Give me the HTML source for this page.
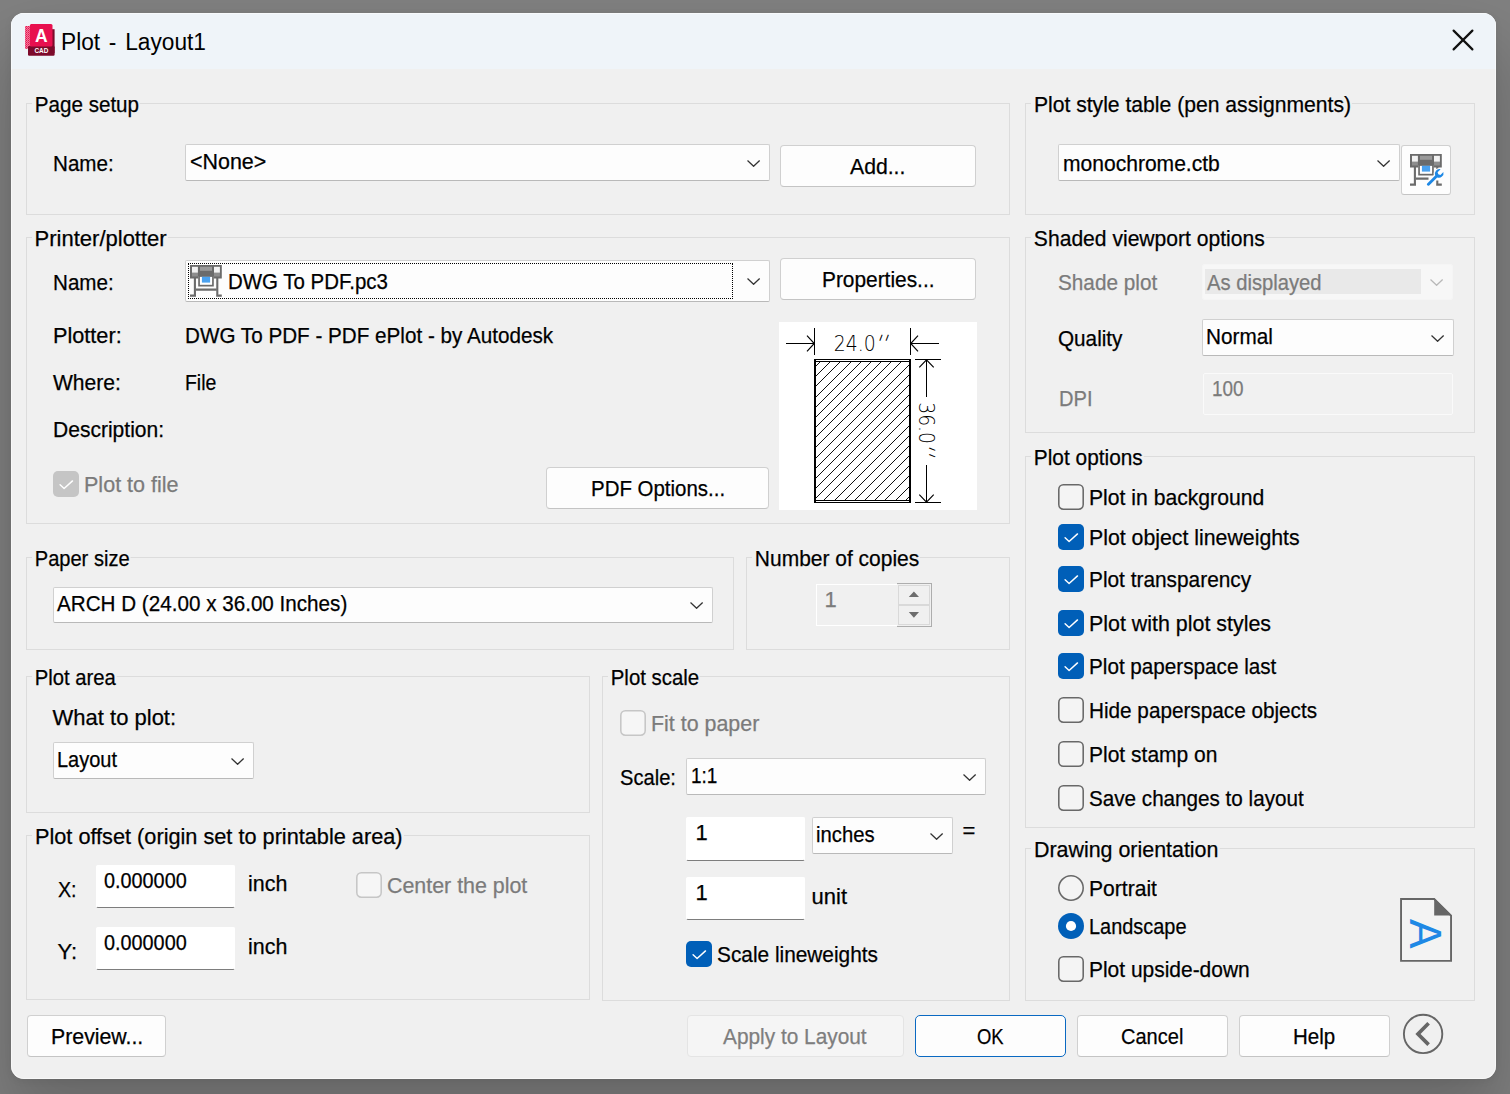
<!DOCTYPE html>
<html lang="en"><head><meta charset="utf-8"><title>Plot - Layout1</title>
<style>
html,body{margin:0;padding:0;}
body{width:1510px;height:1094px;overflow:hidden;background:#818181;position:relative;font-family:"Liberation Sans",sans-serif;font-size:22px;color:#000;}
#shadow{position:absolute;left:11px;top:13px;width:1485px;height:1066px;border-radius:13px;box-shadow:0 2px 8px 0 rgba(0,0,0,.06),0 40px 70px 10px rgba(0,0,0,.19);}
#win{position:absolute;left:11px;top:13px;width:1485px;height:1066px;border-radius:13px;background:#f0f0f0;overflow:hidden;box-shadow:inset 0 0 0 1px rgba(255,255,255,.55);}
#tbar{position:absolute;left:0;top:0;width:100%;height:56px;background:#eff4f9;box-shadow:inset 1px 1px 0 rgba(255,255,255,.55),inset -1px 0 0 rgba(255,255,255,.55);}
#ui{position:absolute;left:0;top:0;width:1510px;height:1094px;}
#ui>div,#ui>svg,#ui>span{position:absolute;box-sizing:border-box;}
.t{-webkit-text-stroke:0.25px currentColor;white-space:nowrap;line-height:30px;height:30px;transform-origin:0 50%;}
.ttl{-webkit-text-stroke:0;word-spacing:2.5px;}
.gl{padding:0 1px 0 3px;margin-left:-3px;}
.grp{border:1px solid #dcdcdc;}
.combo{background:#fdfdfd;border:1px solid #d0d0d0;border-bottom-color:#b9b9b9;border-radius:2px;}
.combo.dis{background:#f7f7f7;border-color:#f5f5f5;}
.btn{background:#fdfdfd;border:1px solid #d0d0d0;border-bottom-color:#c4c4c4;border-radius:4px;}
.btn.bdis{background:#f5f5f5;border-color:#e4e4e4;}
.btn.def{border:1px solid #0a69c2;border-radius:5px;}
.edit{background:#fff;border:1px solid #fff;border-bottom:1px solid #7d7d7d;border-radius:2px;}
.edit.dis{background:#f1f1f1;border:1px solid #fafafa;}
.focus{border:1px dotted #000;}

</style></head>
<body>
<div id="shadow"></div>
<div id="win">
<div id="tbar"></div>
<svg style="position:absolute;left:13px;top:10px" width="32" height="34" viewBox="24 23 32 34">
<defs><pattern id="dp" width="2" height="2" patternUnits="userSpaceOnUse"><rect width="2" height="2" fill="#f27a9b"/><rect width="1" height="1" fill="#e8104f"/><rect x="1" y="1" width="1" height="1" fill="#ea3c6e"/></pattern></defs><rect x="25" y="26" width="5.5" height="22.8" fill="url(#dp)"/>
<rect x="28" y="46" width="26.6" height="9.7" rx="1.2" fill="#7d0a2b"/>
<rect x="51.5" y="29.2" width="3.1" height="24" fill="#7d0a2b"/>
<rect x="29.9" y="23.9" width="22.6" height="22.6" rx="1.5" fill="#e8104f"/>
<text x="41.4" y="41.7" text-anchor="middle" font-family="Liberation Sans, sans-serif" font-weight="bold" font-size="17.5" fill="#fff">A</text>
<text x="41.4" y="53" text-anchor="middle" font-family="Liberation Sans, sans-serif" font-weight="bold" font-size="6.4" fill="#fff">CAD</text>
</svg>
<svg style="position:absolute;left:1439px;top:14px" width="26" height="26" viewBox="1450 27 26 26"><path d="M1453.6 30.6 L1472.4 49.4 M1472.4 30.6 L1453.6 49.4" stroke="#111" stroke-width="2.2" stroke-linecap="round" fill="none"/></svg>
</div>
<div id="ui">
<div class="grp" style="left:26px;top:103px;width:984px;height:112px;"></div>
<div class="combo" style="left:185px;top:144px;width:585px;height:37px;"></div>
<svg class="a" style="left:745.6999999999999px;top:158.54999999999998px" width="15.2" height="9.3" viewBox="-2 -2 15.2 9.3"><path d="M0 0 L5.6 5.3 L11.2 0" fill="none" stroke="#333" stroke-width="1.3" stroke-linecap="square" stroke-linejoin="round"/></svg>
<div class="btn" style="left:780px;top:145px;width:196px;height:42px;"></div>
<div class="grp" style="left:26px;top:237px;width:984px;height:287px;"></div>
<div class="combo" style="left:185px;top:260px;width:585px;height:42px;"></div>
<svg class="a" style="left:745.6999999999999px;top:277.05px" width="15.2" height="9.3" viewBox="-2 -2 15.2 9.3"><path d="M0 0 L5.6 5.3 L11.2 0" fill="none" stroke="#333" stroke-width="1.3" stroke-linecap="square" stroke-linejoin="round"/></svg>
<div class="focus" style="left:188px;top:263px;width:545px;height:36px;"></div>
<svg style="left:189.05px;top:264.3px" width="36" height="36" viewBox="-1 -1 36 36"><path d="M4.9 13 V30.6 M0 30.6 H6 M27.3 13 V30.6 M26.2 30.6 H31.8 M6 24.6 H26.2" stroke="#6b6b6b" stroke-width="2.1" fill="none"/><rect x="9.05" y="11" width="13.9" height="9.65" fill="#fff" stroke="#6b6b6b" stroke-width="1.7"/><rect x="11.9" y="11.7" width="8.2" height="5.9" fill="#4aa1ef"/><path d="M0 0 H31.8 V13.5 H23.6 V11.2 H8.2 V13.5 H0 Z" fill="#6b6b6b"/><rect x="2" y="1.8" width="5.9" height="5.9" fill="#f2f2f2"/><rect x="2" y="8" width="5.9" height="3.5" fill="#8e8e8e"/><rect x="24" y="1.8" width="5.9" height="5.9" fill="#f2f2f2"/><rect x="24" y="8" width="5.9" height="3.5" fill="#8e8e8e"/><rect x="10" y="1.8" width="12" height="4" fill="#9a9a9a"/></svg>
<div class="btn" style="left:780px;top:258px;width:196px;height:42px;"></div>
<svg style="left:53px;top:471px" width="26" height="26" viewBox="0 0 26 26"><rect x="0" y="0" width="26" height="26" rx="5" fill="#c5c5c5"/><path d="M7.1 13.8 L11.1 17.5 L19.5 9.9" fill="none" stroke="#fff" stroke-width="1.45" stroke-linecap="round" stroke-linejoin="round"/></svg>
<div class="btn" style="left:546px;top:467px;width:223px;height:42px;"></div>
<div style="left:779px;top:322px;width:198px;height:188px;background:#fff;"></div><svg style="left:779px;top:322px" width="198" height="188" viewBox="779 322 198 188"><defs><clipPath id="hc"><rect x="816" y="362" width="93" height="138"/></clipPath></defs><path d="M825 357 L677 505 M835 357 L687 505 M845 357 L697 505 M856 357 L708 505 M866 357 L718 505 M876 357 L728 505 M886 357 L738 505 M896 357 L748 505 M906 357 L758 505 M917 357 L769 505 M927 357 L779 505 M937 357 L789 505 M947 357 L799 505 M957 357 L809 505 M967 357 L819 505 M978 357 L830 505 M988 357 L840 505 M998 357 L850 505 M1008 357 L860 505 M1018 357 L870 505 M1028 357 L880 505 M1039 357 L891 505 M1049 357 L901 505 M1059 357 L911 505 " stroke="#000" stroke-width="0.95" fill="none" clip-path="url(#hc)"/><path d="M814 359 H911 V503 H814 Z M816 360 V502 H909 V360 Z M816 361 H909 V362 H816 Z M816 500 H909 V501 H816 Z" fill="#000" fill-rule="evenodd" shape-rendering="crispEdges"/><path d="M814.5 328 V355 M910.5 328 V355 M786 343.5 H814 M911 343.5 H939 M915 359.5 H941 M915 502.5 H941 M926.5 360 V397 M926.5 465 V502" stroke="#000" stroke-width="1" fill="none" shape-rendering="crispEdges"/><path d="M807 335.6 L814.3 343.5 L807 351.4 M918 335.6 L910.7 343.5 L918 351.4 M919.3 367.3 L926.5 359.8 L933.7 367.3 M919.3 494.7 L926.5 502.2 L933.7 494.7" stroke="#000" stroke-width="1.15" fill="none"/><text transform="translate(833.8 351.2) scale(0.875 1)" font-family="DejaVu Sans, sans-serif" font-weight="200" font-size="21.5" fill="#000">24.0<tspan rotate="24" dx="-2.8 0.6" dy="-1.6" font-size="24">''</tspan></text><text transform="translate(918.8 402.2) rotate(90) scale(0.875 1)" font-family="DejaVu Sans, sans-serif" font-weight="200" font-size="21.5" fill="#000">36.0<tspan rotate="24" dx="-2.8 0.6" dy="-1.6" font-size="24">''</tspan></text></svg>
<div class="grp" style="left:26px;top:557px;width:708px;height:93px;"></div>
<div class="combo" style="left:53px;top:587px;width:660px;height:36px;"></div>
<svg class="a" style="left:688.6999999999999px;top:601.0500000000001px" width="15.2" height="9.3" viewBox="-2 -2 15.2 9.3"><path d="M0 0 L5.6 5.3 L11.2 0" fill="none" stroke="#333" stroke-width="1.3" stroke-linecap="square" stroke-linejoin="round"/></svg>
<div class="grp" style="left:746px;top:557px;width:264px;height:93px;"></div>
<div style="left:816px;top:584px;width:82px;height:42px;background:#f0f0f0;border:1px solid #fff;"></div><div style="left:897px;top:583px;width:35px;height:44px;border:1px solid #adadad;border-left:none;background:#f0f0f0;"></div><div style="left:898px;top:585px;width:32px;height:20px;border:1px solid #d9d9d9;background:#f0f0f0;"></div><div style="left:898px;top:605px;width:32px;height:20px;border:1px solid #d9d9d9;background:#f0f0f0;"></div><svg style="left:898px;top:585px" width="32" height="40" viewBox="898 585 32 40"><path d="M908.8 597 L913.9 591.4 L919 597 Z M908.8 612.1 L913.9 617.7 L919 612.1 Z" fill="#6d6d6d"/></svg>
<div class="grp" style="left:26px;top:676px;width:564px;height:137px;"></div>
<div class="combo" style="left:53px;top:742px;width:201px;height:37px;"></div>
<svg class="a" style="left:229.70000000000002px;top:756.5500000000001px" width="15.2" height="9.3" viewBox="-2 -2 15.2 9.3"><path d="M0 0 L5.6 5.3 L11.2 0" fill="none" stroke="#333" stroke-width="1.3" stroke-linecap="square" stroke-linejoin="round"/></svg>
<div class="grp" style="left:602px;top:676px;width:408px;height:325px;"></div>
<svg style="left:620px;top:710px" width="26" height="26" viewBox="0 0 26 26"><rect x="0.8" y="0.8" width="24.4" height="24.4" rx="4.6" fill="#f6f6f6" stroke="#c6c6c6" stroke-width="1.55"/></svg>
<div class="combo" style="left:686px;top:758px;width:300px;height:37px;"></div>
<svg class="a" style="left:961.6999999999999px;top:772.5500000000001px" width="15.2" height="9.3" viewBox="-2 -2 15.2 9.3"><path d="M0 0 L5.6 5.3 L11.2 0" fill="none" stroke="#333" stroke-width="1.3" stroke-linecap="square" stroke-linejoin="round"/></svg>
<div class="edit" style="left:686px;top:817px;width:119px;height:44px;"></div>
<div class="combo" style="left:812px;top:817px;width:141px;height:37px;"></div>
<svg class="a" style="left:928.6999999999999px;top:831.5500000000001px" width="15.2" height="9.3" viewBox="-2 -2 15.2 9.3"><path d="M0 0 L5.6 5.3 L11.2 0" fill="none" stroke="#333" stroke-width="1.3" stroke-linecap="square" stroke-linejoin="round"/></svg>
<div class="edit" style="left:686px;top:877px;width:119px;height:43px;"></div>
<svg style="left:686px;top:941px" width="26" height="26" viewBox="0 0 26 26"><rect x="0" y="0" width="26" height="26" rx="5" fill="#005fb8"/><path d="M7.1 13.8 L11.1 17.5 L19.5 9.9" fill="none" stroke="#fff" stroke-width="1.45" stroke-linecap="round" stroke-linejoin="round"/></svg>
<div class="grp" style="left:26px;top:835px;width:564px;height:165px;"></div>
<div class="edit" style="left:96px;top:865px;width:139px;height:43px;"></div>
<div class="edit" style="left:96px;top:927px;width:139px;height:43px;"></div>
<svg style="left:356px;top:872px" width="26" height="26" viewBox="0 0 26 26"><rect x="0.8" y="0.8" width="24.4" height="24.4" rx="4.6" fill="#f6f6f6" stroke="#c6c6c6" stroke-width="1.55"/></svg>
<div class="btn" style="left:27px;top:1015px;width:139px;height:42px;"></div>
<div class="btn bdis" style="left:687px;top:1015px;width:217px;height:42px;"></div>
<div class="btn def" style="left:915px;top:1015px;width:151px;height:42px;"></div>
<div class="btn" style="left:1077px;top:1015px;width:151px;height:42px;"></div>
<div class="btn" style="left:1239px;top:1015px;width:151px;height:42px;"></div>
<svg style="left:1400px;top:1011px" width="46" height="46" viewBox="1400 1011 46 46"><circle cx="1423.1" cy="1033.9" r="19.2" fill="none" stroke="#666" stroke-width="1.9"/><path d="M1428.6 1023.3 L1418 1033.95 L1428.6 1044.6" fill="none" stroke="#666" stroke-width="3.7"/></svg>
<div class="grp" style="left:1025px;top:103px;width:450px;height:112px;"></div>
<div class="combo" style="left:1058px;top:144px;width:342px;height:37px;"></div>
<svg class="a" style="left:1375.7px;top:158.54999999999998px" width="15.2" height="9.3" viewBox="-2 -2 15.2 9.3"><path d="M0 0 L5.6 5.3 L11.2 0" fill="none" stroke="#333" stroke-width="1.3" stroke-linecap="square" stroke-linejoin="round"/></svg>
<div class="btn" style="left:1401px;top:145px;width:50px;height:50px;border-radius:3px;"></div>
<svg style="left:1409.1px;top:153.2px" width="36" height="36" viewBox="-1 -1 36 36"><path d="M4.9 13 V30.6 M0 30.6 H6 M27.3 13 V15 M27.3 26.5 V30.6 M26.2 30.6 H31.8 M6 24.6 H18.5" stroke="#6b6b6b" stroke-width="2.1" fill="none"/><rect x="9.05" y="11" width="13.9" height="9.65" fill="#fff" stroke="#6b6b6b" stroke-width="1.7"/><rect x="11.9" y="11.7" width="8.2" height="5.9" fill="#4aa1ef"/><path d="M0 0 H31.8 V13.5 H23.6 V11.2 H8.2 V13.5 H0 Z" fill="#6b6b6b"/><rect x="2" y="1.8" width="5.9" height="5.9" fill="#f2f2f2"/><rect x="2" y="8" width="5.9" height="3.5" fill="#8e8e8e"/><rect x="24" y="1.8" width="5.9" height="5.9" fill="#f2f2f2"/><rect x="24" y="8" width="5.9" height="3.5" fill="#8e8e8e"/><rect x="10" y="1.8" width="12" height="4" fill="#9a9a9a"/><path d="M17.2 29.4 L25.2 21.4 A4.6 4.6 0 0 1 30.6 15.2 L27.6 18.2 L28.3 20.3 L30.4 21 L33.4 18 A4.6 4.6 0 0 1 27.2 23.4 L19.2 31.4 A1.42 1.42 0 0 1 17.2 29.4 Z" fill="#1e88e5" stroke="#fdfdfd" stroke-width="2.2" paint-order="stroke" stroke-linejoin="round"/></svg>
<div class="grp" style="left:1025px;top:237px;width:450px;height:196px;"></div>
<div class="combo dis" style="left:1202px;top:264px;width:251px;height:36px;"></div>
<div class="" style="left:1205px;top:269px;width:216px;height:25px;background:#e9e9e9;position:absolute;"></div>
<svg class="a" style="left:1428.7px;top:277.55px" width="15.2" height="9.3" viewBox="-2 -2 15.2 9.3"><path d="M0 0 L5.6 5.3 L11.2 0" fill="none" stroke="#b8b8b8" stroke-width="1.3" stroke-linecap="square" stroke-linejoin="round"/></svg>
<div class="combo" style="left:1202px;top:319px;width:252px;height:37px;"></div>
<svg class="a" style="left:1429.7px;top:333.55px" width="15.2" height="9.3" viewBox="-2 -2 15.2 9.3"><path d="M0 0 L5.6 5.3 L11.2 0" fill="none" stroke="#333" stroke-width="1.3" stroke-linecap="square" stroke-linejoin="round"/></svg>
<div class="edit dis" style="left:1203px;top:373px;width:250px;height:42px;"></div>
<div class="grp" style="left:1025px;top:456px;width:450px;height:372px;"></div>
<svg style="left:1058px;top:484px" width="26" height="26" viewBox="0 0 26 26"><rect x="0.8" y="0.8" width="24.4" height="24.4" rx="4.6" fill="#f4f4f4" stroke="#686868" stroke-width="1.55"/></svg>
<svg style="left:1058px;top:524px" width="26" height="26" viewBox="0 0 26 26"><rect x="0" y="0" width="26" height="26" rx="5" fill="#005fb8"/><path d="M7.1 13.8 L11.1 17.5 L19.5 9.9" fill="none" stroke="#fff" stroke-width="1.45" stroke-linecap="round" stroke-linejoin="round"/></svg>
<svg style="left:1058px;top:566px" width="26" height="26" viewBox="0 0 26 26"><rect x="0" y="0" width="26" height="26" rx="5" fill="#005fb8"/><path d="M7.1 13.8 L11.1 17.5 L19.5 9.9" fill="none" stroke="#fff" stroke-width="1.45" stroke-linecap="round" stroke-linejoin="round"/></svg>
<svg style="left:1058px;top:610px" width="26" height="26" viewBox="0 0 26 26"><rect x="0" y="0" width="26" height="26" rx="5" fill="#005fb8"/><path d="M7.1 13.8 L11.1 17.5 L19.5 9.9" fill="none" stroke="#fff" stroke-width="1.45" stroke-linecap="round" stroke-linejoin="round"/></svg>
<svg style="left:1058px;top:653px" width="26" height="26" viewBox="0 0 26 26"><rect x="0" y="0" width="26" height="26" rx="5" fill="#005fb8"/><path d="M7.1 13.8 L11.1 17.5 L19.5 9.9" fill="none" stroke="#fff" stroke-width="1.45" stroke-linecap="round" stroke-linejoin="round"/></svg>
<svg style="left:1058px;top:697px" width="26" height="26" viewBox="0 0 26 26"><rect x="0.8" y="0.8" width="24.4" height="24.4" rx="4.6" fill="#f4f4f4" stroke="#686868" stroke-width="1.55"/></svg>
<svg style="left:1058px;top:741px" width="26" height="26" viewBox="0 0 26 26"><rect x="0.8" y="0.8" width="24.4" height="24.4" rx="4.6" fill="#f4f4f4" stroke="#686868" stroke-width="1.55"/></svg>
<svg style="left:1058px;top:785px" width="26" height="26" viewBox="0 0 26 26"><rect x="0.8" y="0.8" width="24.4" height="24.4" rx="4.6" fill="#f4f4f4" stroke="#686868" stroke-width="1.55"/></svg>
<div class="grp" style="left:1025px;top:848px;width:450px;height:153px;"></div>
<svg style="left:1058px;top:875px" width="26" height="26" viewBox="0 0 26 26"><circle cx="13" cy="13" r="12.2" fill="#f4f4f4" stroke="#686868" stroke-width="1.55"/></svg>
<svg style="left:1058px;top:913px" width="26" height="26" viewBox="0 0 26 26"><circle cx="13" cy="13" r="13" fill="#005fb8"/><circle cx="13" cy="13" r="5.1" fill="#fff"/></svg>
<svg style="left:1058px;top:956px" width="26" height="26" viewBox="0 0 26 26"><rect x="0.8" y="0.8" width="24.4" height="24.4" rx="4.6" fill="#f4f4f4" stroke="#686868" stroke-width="1.55"/></svg>
<svg style="left:1398px;top:896px" width="56" height="68" viewBox="1398 896 56 68"><path d="M1401.05 898.95 H1434.2 L1451.05 915.6 V960.85 H1401.05 Z" fill="#f3f3f3" stroke="#666" stroke-width="1.9"/><path d="M1434.2 898.2 L1451.8 915.6 H1434.2 Z" fill="#666"/><text transform="translate(1409.9 933.9) rotate(90)" x="0" y="0" text-anchor="middle" font-family="Liberation Sans, sans-serif" font-size="44.5" fill="#1e88e5">A</text></svg>
<span class="t ttl" id="t0" style="left:60.6px;top:26.7px;font-size:23.5px;transform:scaleX(0.9663);">Plot - Layout1</span>
<span class="t gl" id="t1" style="left:34.6px;top:90.2px;transform:scaleX(0.9363);background:#f0f0f0;">Page setup</span>
<span class="t" id="t2" style="left:52.6px;top:149.2px;transform:scaleX(0.9364);">Name:</span>
<span class="t" id="t3" style="left:189.6px;top:147.2px;transform:scaleX(0.9740);">&lt;None&gt;</span>
<span class="t" id="t4" style="left:849.6px;top:151.7px;transform:scaleX(0.9639);">Add...</span>
<span class="t gl" id="t5" style="left:34.6px;top:224.2px;transform:scaleX(1.0000);background:#f0f0f0;">Printer/plotter</span>
<span class="t" id="t6" style="left:52.6px;top:268.2px;transform:scaleX(0.9364);">Name:</span>
<span class="t" id="t7" style="left:227.6px;top:267.2px;transform:scaleX(0.9298);">DWG To PDF.pc3</span>
<span class="t" id="t8" style="left:821.6px;top:264.7px;transform:scaleX(0.9483);">Properties...</span>
<span class="t" id="t9" style="left:52.6px;top:321.2px;transform:scaleX(0.9853);">Plotter:</span>
<span class="t" id="t10" style="left:184.6px;top:321.2px;transform:scaleX(0.9388);">DWG To PDF - PDF ePlot - by Autodesk</span>
<span class="t" id="t11" style="left:52.6px;top:368.2px;transform:scaleX(0.9565);">Where:</span>
<span class="t" id="t12" style="left:184.6px;top:368.2px;transform:scaleX(0.8829);">File</span>
<span class="t" id="t13" style="left:52.6px;top:415.2px;transform:scaleX(0.9561);">Description:</span>
<span class="t" id="t14" style="left:83.6px;top:470.2px;color:#7b7b7b;transform:scaleX(0.9791);">Plot to file</span>
<span class="t" id="t15" style="left:590.6px;top:473.7px;transform:scaleX(0.9295);">PDF Options...</span>
<span class="t gl" id="t16" style="left:34.6px;top:544.2px;transform:scaleX(0.9125);background:#f0f0f0;">Paper size</span>
<span class="t" id="t17" style="left:56.6px;top:588.7px;transform:scaleX(0.9383);">ARCH D (24.00 x 36.00 Inches)</span>
<span class="t gl" id="t18" style="left:754.6px;top:544.2px;transform:scaleX(0.9532);background:#f0f0f0;">Number of copies</span>
<span class="t" id="t19" style="left:824.6px;top:585.2px;color:#7b7b7b;">1</span>
<span class="t gl" id="t20" style="left:34.6px;top:663.2px;transform:scaleX(0.9204);background:#f0f0f0;">Plot area</span>
<span class="t" id="t21" style="left:52.6px;top:703.2px;transform:scaleX(1.0000);">What to plot:</span>
<span class="t" id="t22" style="left:56.6px;top:745.2px;transform:scaleX(0.9090);">Layout</span>
<span class="t gl" id="t23" style="left:610.6px;top:663.2px;transform:scaleX(0.9255);background:#f0f0f0;">Plot scale</span>
<span class="t" id="t24" style="left:650.6px;top:709.2px;color:#7b7b7b;transform:scaleX(0.9729);">Fit to paper</span>
<span class="t" id="t25" style="left:619.6px;top:763.2px;transform:scaleX(0.9151);">Scale:</span>
<span class="t" id="t26" style="left:690.6px;top:761.2px;transform:scaleX(0.8629);">1:1</span>
<span class="t" id="t27" style="left:695.6px;top:818.2px;">1</span>
<span class="t" id="t28" style="left:815.6px;top:820.2px;transform:scaleX(0.9205);">inches</span>
<span class="t" id="t29" style="left:962.6px;top:816.2px;">=</span>
<span class="t" id="t30" style="left:695.6px;top:878.2px;">1</span>
<span class="t" id="t31" style="left:811.6px;top:882.2px;transform:scaleX(1.0000);">unit</span>
<span class="t" id="t32" style="left:716.6px;top:940.2px;transform:scaleX(0.9467);">Scale lineweights</span>
<span class="t gl" id="t33" style="left:34.6px;top:822.2px;transform:scaleX(0.9865);background:#f0f0f0;">Plot offset (origin set to printable area)</span>
<span class="t" id="t34" style="left:57.6px;top:875.2px;transform:scaleX(0.8942);">X:</span>
<span class="t" id="t35" style="left:103.6px;top:866.2px;transform:scaleX(0.9010);">0.000000</span>
<span class="t" id="t36" style="left:247.6px;top:869.2px;transform:scaleX(0.9743);">inch</span>
<span class="t" id="t37" style="left:57.6px;top:937.2px;transform:scaleX(1.0000);">Y:</span>
<span class="t" id="t38" style="left:103.6px;top:928.2px;transform:scaleX(0.9010);">0.000000</span>
<span class="t" id="t39" style="left:247.6px;top:932.2px;transform:scaleX(0.9743);">inch</span>
<span class="t" id="t40" style="left:386.6px;top:871.2px;color:#7b7b7b;transform:scaleX(0.9722);">Center the plot</span>
<span class="t" id="t41" style="left:50.6px;top:1021.7px;transform:scaleX(0.9677);">Preview...</span>
<span class="t" id="t42" style="left:722.6px;top:1021.7px;color:#7e7e7e;transform:scaleX(0.9470);">Apply to Layout</span>
<span class="t" id="t43" style="left:976.6px;top:1021.7px;transform:scaleX(0.8382);">OK</span>
<span class="t" id="t44" style="left:1120.6px;top:1021.7px;transform:scaleX(0.9103);">Cancel</span>
<span class="t" id="t45" style="left:1292.6px;top:1021.7px;transform:scaleX(0.9317);">Help</span>
<span class="t gl" id="t46" style="left:1033.6px;top:90.2px;transform:scaleX(0.9605);background:#f0f0f0;">Plot style table (pen assignments)</span>
<span class="t" id="t47" style="left:1062.6px;top:149.2px;transform:scaleX(0.9570);">monochrome.ctb</span>
<span class="t gl" id="t48" style="left:1033.6px;top:224.2px;transform:scaleX(0.9583);background:#f0f0f0;">Shaded viewport options</span>
<span class="t" id="t49" style="left:1057.6px;top:268.2px;color:#7b7b7b;transform:scaleX(0.9428);">Shade plot</span>
<span class="t" id="t50" style="left:1206.6px;top:268.2px;color:#7b7b7b;transform:scaleX(0.9187);">As displayed</span>
<span class="t" id="t51" style="left:1057.6px;top:324.2px;transform:scaleX(0.9411);">Quality</span>
<span class="t" id="t52" style="left:1205.6px;top:322.2px;transform:scaleX(0.9422);">Normal</span>
<span class="t" id="t53" style="left:1058.6px;top:384.2px;color:#7b7b7b;transform:scaleX(0.9140);">DPI</span>
<span class="t" id="t54" style="left:1211.6px;top:374.2px;color:#7b7b7b;transform:scaleX(0.8607);">100</span>
<span class="t gl" id="t55" style="left:1033.6px;top:443.2px;transform:scaleX(0.9473);background:#f0f0f0;">Plot options</span>
<span class="t" id="t56" style="left:1088.6px;top:483.2px;transform:scaleX(0.9613);">Plot in background</span>
<span class="t" id="t57" style="left:1088.6px;top:523.2px;transform:scaleX(0.9677);">Plot object lineweights</span>
<span class="t" id="t58" style="left:1088.6px;top:565.2px;transform:scaleX(0.9473);">Plot transparency</span>
<span class="t" id="t59" style="left:1088.6px;top:609.2px;transform:scaleX(0.9731);">Plot with plot styles</span>
<span class="t" id="t60" style="left:1088.6px;top:652.2px;transform:scaleX(0.9397);">Plot paperspace last</span>
<span class="t" id="t61" style="left:1088.6px;top:696.2px;transform:scaleX(0.9419);">Hide paperspace objects</span>
<span class="t" id="t62" style="left:1088.6px;top:740.2px;transform:scaleX(0.9549);">Plot stamp on</span>
<span class="t" id="t63" style="left:1088.6px;top:784.2px;transform:scaleX(0.9386);">Save changes to layout</span>
<span class="t gl" id="t64" style="left:1033.6px;top:835.2px;transform:scaleX(0.9734);background:#f0f0f0;">Drawing orientation</span>
<span class="t" id="t65" style="left:1088.6px;top:874.2px;transform:scaleX(0.9577);">Portrait</span>
<span class="t" id="t66" style="left:1088.6px;top:912.2px;transform:scaleX(0.9057);">Landscape</span>
<span class="t" id="t67" style="left:1088.6px;top:955.2px;transform:scaleX(0.9521);">Plot upside-down</span>
</div>
</body></html>
